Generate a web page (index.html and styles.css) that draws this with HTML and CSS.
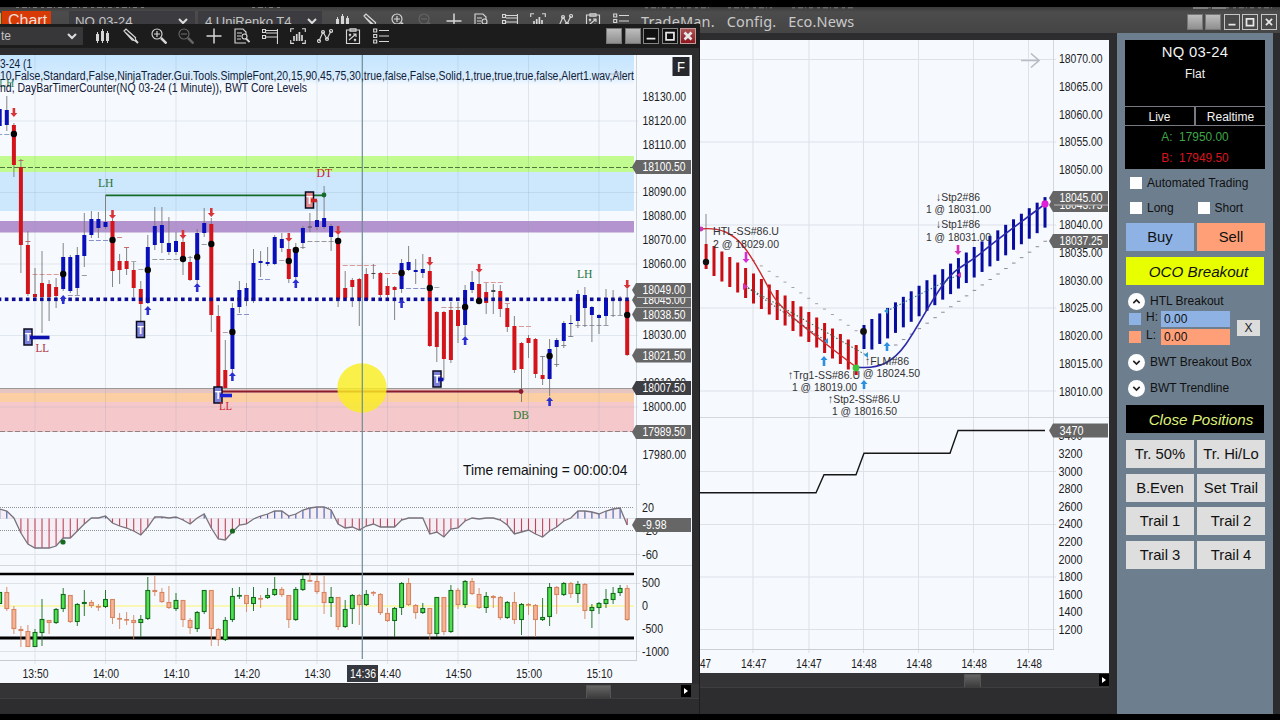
FILE: index.html
```html
<!DOCTYPE html>
<html lang="en">
<head>
  <meta charset="UTF-8">
  <meta name="viewport" content="width=device-width, initial-scale=1">
  <title>NQ 03-24 | Chart</title>
  <link rel="stylesheet" href="styles.css">
</head>
<body>

  <!-- toolbar icons, shared by both chart windows -->
  <svg class="icon-defs" width="0" height="0">
    <symbol id="i-bars" viewBox="0 0 16 16"><path d="M2.5 4v11M7.5 1v14M12.5 3v12" stroke-width="1"/><path d="M2.5 6v7M7.5 3v10M12.5 5v8" stroke-width="3"/></symbol>
    <symbol id="i-pencil" viewBox="0 0 16 16"><path d="M1 3l2-2 9 8 1 4-4-1zM3 5l8 7M5 3l8 7"/><path d="M12 12l3 3" stroke-width="2"/></symbol>
    <symbol id="i-zoomin" viewBox="0 0 16 16"><circle cx="6" cy="6" r="5"/><path d="M3 6h6M6 3v6"/><path d="M10 10l5.500 5.500" stroke-width="2.500"/></symbol>
    <symbol id="i-zoomout" viewBox="0 0 16 16"><circle cx="6" cy="6" r="5"/><path d="M3 6h6"/><path d="M10 10l5.500 5.500" stroke-width="2.500"/></symbol>
    <symbol id="i-cross" viewBox="0 0 16 16"><path d="M8 .5v15M.5 8h15" stroke-width="1.500"/></symbol>
    <symbol id="i-doc" viewBox="0 0 16 16"><path d="M12 6V4L9 1H1v14h11M3 5h5M3 8h4M3 11h4"/><circle cx="10.500" cy="8.500" r="2.500"/><path d="M12 10.500l3.500 3.500" stroke-width="1.800"/></symbol>
    <symbol id="i-panel" viewBox="0 0 16 16"><path d="M.5 1.500h3v3h-3zM.5 7.500h3v3h-3zM4 2.500h11M4 5h11M4 9h11M15.500 1v15"/></symbol>
    <symbol id="i-frame" viewBox="0 0 16 16"><path d="M.7 4V.7H4M12 .7h3.300V4M15.300 12v3.300H12M4 15.300H.7V12"/><path d="M4 8v5M6.700 6v7M9.400 4v9M12 7v6" stroke-width="1.700"/></symbol>
    <symbol id="i-zigzag" viewBox="0 0 16 16"><path d="M2 13l4-9 4 7 4-8"/><circle cx="2" cy="13" r="1.500"/><circle cx="6" cy="4" r="1.500"/><circle cx="10" cy="11" r="1.500"/><circle cx="14" cy="3" r="1.500"/></symbol>
    <symbol id="i-board" viewBox="0 0 16 16"><path d="M1.500 2h13v13.500h-13zM5 .7h6v2.500H5zM4 12l7-6M8 6h3v3M4 6l2 2M6 6L4 8M9 11l2 2M11 11l-2 2"/></symbol>
    <symbol id="i-list" viewBox="0 0 16 16"><path d="M.7 1h3v3h-3zM.7 6.500h3v3h-3zM.7 12h3v3h-3zM6 2.500h10M6 8h10M6 13.500h10"/></symbol>
    <symbol id="i-chevron" viewBox="0 0 10 8"><path d="M1 2l4 4 4-4" stroke-width="2"/></symbol>
  </svg>

  <div class="desktop">

    <div class="window window-back">
      <div class="titlebar">
        <span class="tab-edge"></span>
        <span class="tab">Chart</span>
        <div class="select select-symbol">NQ 03-24 <svg class="chevron"><use href="#i-chevron"/></svg></div>
        <div class="select select-type">4 UniRenko T4 <svg class="chevron"><use href="#i-chevron"/></svg></div>
        <div class="tools tools-back"></div>
        <nav class="menu">
          <span>TradeMan.</span>
          <span>Config.</span>
          <span>Eco.News</span>
        </nav>
        <div class="win-buttons">
          <i class="wb"></i>
          <i class="wb"></i>
          <i class="wb wb-line"><svg viewBox="0 0 16 16"><path d="M4 11h8"/></svg></i>
          <i class="wb wb-line"><svg viewBox="0 0 16 16"><path d="M4 4.500h8V12H4z"/></svg></i>
          <i class="wb wb-line"><svg viewBox="0 0 16 16"><path d="M4.500 4.500l7 7M11.500 4.500l-7 7"/></svg></i>
        </div>
        <!-- lower edge of the window behind -->
        <svg class="behind" viewBox="0 0 1280 3">
          <path d="M16 .5h130M252 .5h30M645 .8h64M728 .8h44M792 .8h62M1208 .8h64" stroke-dasharray="3 3 5 2 1 3 4 4"/>
          <path d="M1193 1h15M1212 1h14" stroke-width="2"/>
        </svg>
      </div>

      <div class="content">
        <div class="chart-back">
          <svg id="renkoChart" width="409" height="633" viewBox="700 40 409 633"></svg>
          <div class="scrollbar">
            <span class="thumb thumb-small"></span>
            <span class="scroll-arrow"></span>
          </div>
        </div>

        <aside class="panel">
          <div class="account">
            <div class="account-head">
              <div class="instrument">NQ 03-24</div>
              <div class="position">Flat</div>
            </div>
            <div class="account-mode">
              <span>Live</span>
              <span>Realtime</span>
            </div>
            <div class="quotes">
              <div class="ask">A:&nbsp; 17950.00</div>
              <div class="bid">B:&nbsp; 17949.50</div>
            </div>
          </div>

          <div class="checks">
            <label class="check"><i class="box"></i>Automated Trading</label>
            <label class="check"><i class="box"></i>Long</label>
            <label class="check"><i class="box"></i>Short</label>
          </div>

          <div class="orders">
            <button class="btn btn-buy">Buy</button>
            <button class="btn btn-sell">Sell</button>
          </div>
          <button class="btn btn-oco">OCO Breakout</button>

          <div class="expander">
            <i class="round"><svg viewBox="0 0 16 16"><path d="M5 9.500l3-3 3 3"/></svg></i>HTL Breakout
          </div>
          <div class="levels">
            <div class="level-rows">
              <div class="level"><i class="swatch blue"></i><span>H:</span><b class="blue">0.00</b></div>
              <div class="level"><i class="swatch orange"></i><span>L:</span><b class="orange">0.00</b></div>
            </div>
            <button class="btn-x">X</button>
          </div>
          <div class="expander expander-box">
            <i class="round"><svg viewBox="0 0 16 16"><path d="M5 6.500l3 3 3-3"/></svg></i>BWT Breakout Box
          </div>
          <div class="expander expander-trend">
            <i class="round"><svg viewBox="0 0 16 16"><path d="M5 6.500l3 3 3-3"/></svg></i>BWT Trendline
          </div>

          <button class="btn btn-close">Close Positions</button>

          <div class="trails">
            <button class="btn">Tr. 50%</button>
            <button class="btn">Tr. Hi/Lo</button>
            <button class="btn">B.Even</button>
            <button class="btn">Set Trail</button>
            <button class="btn">Trail 1</button>
            <button class="btn">Trail 2</button>
            <button class="btn">Trail 3</button>
            <button class="btn">Trail 4</button>
          </div>
        </aside>
      </div>
    </div>

    <div class="window window-front">
      <div class="toolbar">
        <div class="select select-interval">te <svg class="chevron"><use href="#i-chevron"/></svg></div>
        <div class="tools tools-front"></div>
        <div class="win-buttons">
          <i class="wb"></i>
          <i class="wb"></i>
          <i class="wb wb-dark"><svg viewBox="0 0 16 16"><path d="M3 11h10"/></svg></i>
          <i class="wb wb-dark"><svg viewBox="0 0 16 16"><path d="M3.500 4h9v8.500h-9z"/></svg></i>
          <i class="wb wb-close"><svg viewBox="0 0 16 16"><path d="M4 4l8 8M12 4l-8 8"/></svg></i>
        </div>
      </div>
      <div class="chart-front">
        <svg id="minuteChart" width="692" height="628" viewBox="0 55 692 628"></svg>
      </div>
      <div class="scrollbar">
        <span class="thumb"></span>
        <span class="scroll-arrow"></span>
      </div>
    </div>

  </div>

  <script src="charts.js"></script>
</body>
</html>
```

FILE: styles.css
```css
* {
  margin: 0;
  padding: 0;
  box-sizing: border-box;
}

body {
  width: 1280px;
  height: 720px;
  overflow: hidden;
  background-color: #000;
  font-family: "Liberation Sans", Arial, sans-serif;
  color: #111;
}

.icon-defs {
  position: absolute;
}

.desktop {
  position: relative;
  width: 1280px;
  height: 714px;
  padding-top: 7px;
}

.window {
  display: flex;
  flex-direction: column;
  background-color: #2d2d30;
}

.window-back {
  height: 707px;
}

/* window floating over the first one */
.window-front {
  position: absolute;
  left: 0;
  top: 24px;
  width: 699px;
  height: 690px;
  box-shadow: 1px 0 0 #1c1c1e;
}

/* ---- title bar of the back window ---- */
.titlebar {
  position: relative;
  display: flex;
  height: 26px;
  padding-right: 3px;
  background: linear-gradient(#3a3a3b, #4c4c4c 5px, #454546);
}

.behind {
  position: absolute;
  left: 0;
  top: 0;
  width: 1280px;
  height: 3px;
  fill: none;
  stroke: #999;
  opacity: 0.7;
}

.tab-edge {
  width: 1px;
  height: 18px;
  margin-top: 6px;
  background-color: #e9a02c;
}

.tab {
  width: 49px;
  margin: 4px 0 0 1px;
  padding-left: 6px;
  background-color: #d83a06;
  color: #f1dfd8;
  font-size: 16px;
  line-height: 20px;
}

.select {
  display: flex;
  align-items: center;
  justify-content: space-between;
  background-color: #3c3c40;
  color: #c4c4c4;
  font-size: 14px;
}

.select-symbol {
  width: 126px;
  height: 20px;
  margin: 4px 0 0 18px;
  padding: 0 7px 0 6px;
  font-size: 13.3px;
}

.select-type {
  width: 124px;
  height: 20px;
  margin: 4px 0 0 3px;
  padding: 0 5px 0 7px;
  font-size: 13px;
}

.chevron {
  width: 10px;
  height: 8px;
  fill: none;
  stroke: #ddd;
}

.tools {
  display: flex;
  fill: none;
  stroke: #d6d6d6;
  stroke-width: 1.15;
}

.tools svg {
  width: 16px;
  height: 16px;
  flex: none;
}

.tools .off {
  stroke: #666;
}

.tools-back {
  gap: 11.8px;
  width: 316px;
  padding: 6px 0 0 13px;
}

.tools-front {
  gap: 11.8px;
  width: 523px;
  padding-left: 12px;
}

.menu {
  display: flex;
  gap: 12px;
  margin-left: 3px;
  padding-top: 4px;
  color: #c9c9c9;
  font-family: "Noto Sans", sans-serif;
  font-size: 14.5px;
  line-height: 20px;
  letter-spacing: 0.15px;
}

.win-buttons {
  display: flex;
  gap: 2.6px;
}

.titlebar .win-buttons {
  margin: 7px 0 0 auto;
}

.wb {
  width: 16px;
  height: 16px;
  border: 1px solid #777;
  background: linear-gradient(#bdbdbd, #8f8f8f);
}

.wb svg {
  display: block;
  width: 14px;
  height: 14px;
  fill: none;
  stroke: #e8e8e8;
  stroke-width: 2;
}

.wb-line {
  border-color: #c5c5c5;
  background: #4a4a4a;
}

.wb-dark {
  border-color: #858585;
  background: #111;
}

.wb-close {
  border-color: #c59a9a;
  background: linear-gradient(#a55, #8d1520);
}

.wb-close svg {
  stroke-width: 3;
}

/* ---- front window ---- */
.toolbar {
  display: flex;
  align-items: center;
  height: 24px;
  background-color: #1c1c1d;
}

.select-interval {
  width: 83px;
  height: 18px;
  padding: 0 6px 0 1px;
  background-color: #37373a;
  font-size: 12px;
}

.chart-front {
  height: 629px;
  margin-top: 7px;
}

.chart-front svg,
.chart-back svg {
  display: block;
}

.scrollbar {
  display: flex;
  align-items: center;
  justify-content: flex-end;
  height: 15px;
  background-color: #343436;
  border-bottom: 1px solid #3e3e40;
}

.thumb {
  width: 25px;
  height: 13px;
  margin-right: 70px;
  border: 1px solid #555;
  border-bottom: none;
  background: linear-gradient(#656565, #3c3c3c);
}

.thumb-small {
  width: 17px;
  margin-right: 118px;
}

.scroll-arrow {
  display: flex;
  align-items: center;
  justify-content: center;
  width: 10px;
  height: 12px;
  background-color: #000;
}

.scroll-arrow::after {
  content: "";
  border-left: 4px solid #fff;
  border-top: 3px solid transparent;
  border-bottom: 3px solid transparent;
}

.window-front .scrollbar {
  padding-right: 8px;
}

/* ---- back window content ---- */
.content {
  display: flex;
  justify-content: flex-end;
  height: 681px;
  padding-right: 7px;
}

.chart-back {
  width: 409px;
  margin: 7px 8px 0 0;
}

/* ---- order panel ---- */
.panel {
  display: flex;
  flex-direction: column;
  width: 156px;
  padding: 7px 8px;
  background-color: #6d7f8f;
}

.account {
  display: flex;
  flex-direction: column;
  gap: 1px;
  height: 129px;
  background-color: #777a80;
  color: #f2f2f2;
  text-align: center;
}

.account-head {
  height: 68px;
  padding-top: 3px;
  background-color: #000;
}

.instrument {
  font-size: 14.8px;
  line-height: 18px;
  letter-spacing: 0.3px;
}

.position {
  margin-top: 5px;
  font-size: 12px;
  line-height: 16px;
}

.account-mode {
  display: flex;
  gap: 2px;
  height: 18px;
  font-size: 12px;
  line-height: 20px;
}

.account-mode span {
  flex: 1;
  background-color: #000;
}

.quotes {
  flex: 1;
  padding-top: 1px;
  background-color: #000;
  font-size: 11.9px;
  line-height: 21px;
}

.ask {
  color: #3fa648;
}

.bid {
  color: #d8141e;
}

.checks {
  display: flex;
  flex-wrap: wrap;
  align-content: flex-start;
  row-gap: 9px;
  height: 54px;
  padding: 6px 0 0 5px;
  font-size: 12px;
}

.check {
  display: flex;
  align-items: center;
  gap: 5px;
  width: 67.500px;
  height: 16px;
  white-space: nowrap;
}

.check:first-child {
  width: 130px;
}

.box {
  width: 12px;
  height: 12px;
  background-color: #fff;
}

.orders {
  display: flex;
  gap: 3px;
  margin: 0 0 6px 1px;
}

.btn {
  width: 68px;
  height: 28px;
  border: none;
  background-color: #dedede;
  color: #111;
  font-family: inherit;
  font-size: 14.8px;
}

.btn-buy {
  background-color: #8db2e3;
}

.btn-sell {
  background-color: #ff9f78;
}

.btn-oco,
.btn-close {
  width: 138px;
  margin-left: 1px;
  padding-left: 7px;
  font-size: 15.2px;
  font-style: italic;
}

.btn-oco {
  background-color: #e8ff00;
}

.btn-close {
  margin-top: 8px;
  padding-left: 12px;
  background-color: #000;
  color: #dff07a;
}

.expander {
  display: flex;
  align-items: center;
  gap: 5px;
  height: 18px;
  margin-top: 7px;
  padding-left: 3px;
  font-size: 12px;
}

.round {
  width: 17px;
  height: 17px;
  border-radius: 50%;
  background-color: #fff;
}

.round svg {
  display: block;
  fill: none;
  stroke: #222;
  stroke-width: 1.6;
}

.levels {
  display: flex;
  align-items: center;
  gap: 7px;
  padding: 1px 0 0 4px;
}

.level-rows {
  display: flex;
  flex-direction: column;
  gap: 2px;
}

.level {
  display: flex;
  align-items: center;
  height: 16px;
  font-size: 12px;
}

.level span {
  width: 20px;
  padding-left: 5px;
  line-height: 10px;
  margin-top: -5px;
}

.level b {
  width: 69px;
  height: 16px;
  padding-left: 3px;
  font-weight: normal;
  line-height: 17px;
}

.swatch {
  width: 12px;
  height: 12px;
}

.blue {
  background-color: #8db2e3;
}

.orange {
  background-color: #ff9f78;
}

.btn-x {
  width: 23px;
  height: 16px;
  border: none;
  background-color: #dcdcdc;
  color: #222;
  font-family: inherit;
  font-size: 12px;
}

.expander-box {
  margin-top: 8px;
}

.expander-trend {
  margin-top: 8px;
}

.trails {
  display: grid;
  grid-template-columns: 68px 68px;
  gap: 5.7px 3px;
  margin: 7px 0 0 1px;
}

/* ---- chart text ---- */
.axis {
  font-size: 12px;
  fill: #1c1c1c;
}

.tag-text {
  font-size: 12px;
  fill: #fff;
}

.info {
  font-size: 12px;
  fill: #10203a;
}

.swing {
  font-family: "Liberation Serif", serif;
  font-size: 12.5px;
}

.remaining {
  font-size: 14.5px;
  fill: #111;
}

.trade {
  font-size: 11.5px;
  fill: #333;
}
```

FILE: charts.js
```js
const BG = '#f6f9fe';
const GRID = '#dde1e8';

function line(x1, y1, x2, y2, color, width, dash) {
  return `<line x1="${x1}" y1="${y1}" x2="${x2}" y2="${y2}" stroke="${color}" stroke-width="${width || 1}"${dash ? ` stroke-dasharray="${dash}"` : ''}/>`;
}

function rect(x, y, w, h, fill, extra) {
  return `<rect x="${x}" y="${y}" width="${w}" height="${h}" fill="${fill}" ${extra || ''}/>`;
}

function text(x, y, str, cls, len, extra) {
  const fit = len ? `textLength="${len}" lengthAdjust="spacingAndGlyphs"` : '';
  return `<text x="${x}" y="${y}" class="${cls}" ${fit} ${extra || ''}>${str}</text>`;
}

function dot(x, y, r, color) {
  return `<circle cx="${x}" cy="${y}" r="${r}" fill="${color}"/>`;
}

// price marker on the right axis, y is its middle
function tag(x, y, w, str, len, color) {
  return `<path d="M${x} ${y}l4 -7h${w - 4}v14h${4 - w}z" fill="${color || '#666'}"/>` +
    text(x + 10.5, y + 4.3, str, 'tag-text', len);
}

// small arrow, dir 1 = down, -1 = up, y is the tip
function arrow(x, y, dir, color, h) {
  return line(x, y - dir * (h || 9), x, y - dir * 2, color, 2.6) +
    `<path d="M${x - 3.5} ${y - dir * 4}h7l-3.500 ${dir * 4}z" fill="${color}"/>`;
}

// ---------- toolbars ----------
const icons = ['bars', 'pencil', 'zoomin', 'zoomout', 'cross', 'doc', 'panel', 'frame', 'zigzag', 'board', 'list'];
document.querySelectorAll('.tools').forEach(el => {
  el.innerHTML = icons.map(n => `<svg class="${n === 'zoomout' ? 'off' : ''}"><use href="#i-${n}"/></svg>`).join('');
});

// ---------- 1 minute chart ----------
// minutes from 13:50, colour, high, body top, body bottom, low
const candles = [
  [-5,'b',109,109,126,126],[-4,'b',96,110,125,131],[-3,'r',123,125,165,177],[-2,'r',159,167,245,273],
  [-1,'r',231,245,294,296],[0,'r',268,294,297,298],[1,'r',251,283,297,333],[2,'r',280,284,297,321],
  [3,'r',278,287,296,308],[4,'b',243,257,289,291],[5,'b',255,257,291,293],[6,'b',247,255,288,295],
  [7,'b',213,235,256,267],[8,'b',211,219,235,238],[9,'b',212,219,228,238],[10,'b',195,222,227,229],
  [11,'r',219,221,271,287],[12,'r',254,261,270,284],[13,'r',248,261,269,275],[14,'r',262,270,288,297],
  [15,'r',281,289,304,323],[16,'b',235,247,303,304],[17,'b',207,226,245,250],[18,'b',207,225,243,253],
  [19,'b',217,243,252,255],[20,'b',232,241,252,255],[21,'r',238,242,260,275],[22,'r',256,262,280,281],
  [23,'b',229,233,280,283],[24,'b',208,223,233,237],[25,'r',218,224,315,332],[26,'r',305,316,387,388],
  [27,'r',340,370,388,389],[28,'b',303,308,369,372],[29,'b',281,290,307,313],[30,'b',283,288,301,306],
  [31,'b',249,263,301,303],[32,'b',251,261,263,277],[33,'b',247,262,264,266],[34,'b',235,237,264,265],
  [35,'b',233,239,248,252],[36,'r',242,249,279,283],[37,'b',243,250,277,279],[38,'b',226,228,243,249],
  [39,'k',213,226.5,227.5,232],[40,'b',200,220,227,230],[41,'b',186,218,227,229],[42,'b',224,226,237,251],
  [43,'r',235,241,299,307],[44,'r',271,288,298,300],[45,'r',278,280,287,307],[46,'r',278,279,298,326],
  [47,'r',268,274,300,300],[48,'k',264,273,274,279],[49,'r',272,273,295,297],[50,'r',278,286,295,298],
  [51,'r',286,287,290,320],[52,'b',259,263,289,293],[53,'b',246,262,270,271],[54,'b',259,270,272,284],
  [55,'b',254,269,273,278],[56,'r',266,271,346,347],[57,'r',311,312,347,362],[58,'r',311,312,359,380],
  [59,'r',302,310,360,363],[60,'r',302,310,326,343],[61,'b',285,290,325,336],[62,'b',271,282,290,293],
  [63,'r',273,284,301,303],[64,'r',283,292,303,314],[65,'k',284,290,292,314],[66,'r',285,291,309,317],
  [67,'r',304,308,327,332],[68,'r',316,326,370,373],[69,'r',342,343,369,402],[70,'r',335,338,343,358],
  [71,'r',338,339,374,378],[72,'r',356,375,379,385],[73,'b',339,349,379,396],[74,'b',338,340,347,367],
  [75,'b',321,323,341,348],[76,'b',315,323,324,337],[77,'b',290,294,321,328],[78,'b',287,295,308,327],
  [79,'b',306,307,315,342],[80,'b',314,315,318,334],[81,'b',289,298,316,325],[82,'k',290,299,300,317],
  [83,'k',296,299,300,315],[84,'r',289,300,355,356]
];
const dots = [[-3,134],[4,274],[11,240],[16,270],[21,259],[23,257],[25,244],[28,332],[36,261],[37,250],[43,241],[52,273],[56,288],[61,307],[63,301],[73,356],[84,315]];
const downs = [[-3,117],[11,219],[21,239],[25,217],[36,242],[43,235],[56,266],[63,273],[84,289]];
const ups = [[4,295],[16,306],[23,283],[28,372],[37,279],[52,299],[61,336],[73,397]];
// stop dashes: from minute, to minute, y, colour
const stops = [
  [-5,-4,134,'#8fa0c0'],[0,3,274,'#d99'],[-2,-2,160,'#c66'],[-1,-1,241,'#c66'],[5,6,295,'#99a'],[7,7,275,'#99a'],[8,10,240,'#8790c8'],
  [12,12,237,'#c88'],[13,13,247,'#c66'],[14,14,261,'#aaa'],[15,15,269,'#aaa'],[17,20,259,'#999'],[22,22,257,'#aaa'],
  [24,24,244,'#99a'],[27,27,332,'#b9a'],[29,30,314,'#8790c8'],[32,33,279,'#8790c8'],[35,35,260,'#aaa'],[38,38,247,'#99a'],
  [39,42,241,'#999'],[44,48,265,'#d99'],[50,51,273,'#d77'],[53,55,288,'#8790c8'],[57,57,287,'#aaa'],[58,60,307,'#c99'],
  [64,66,282,'#d99'],[67,67,303,'#c99'],[69,70,326,'#d99'],[72,72,356,'#889'],[74,74,364,'#889'],[75,75,345,'#889'],
  [76,76,336,'#889'],[77,81,325,'#99a'],[82,83,315,'#99a']
];
const osc = [509,511,518,533,544,548,548,548,546,538,538,531,524,518,518,516,523,526,528,531,535,527,517,517,518,517,520,524,518,514,528,539,540,532,525,524,519,516,514,511,511,516,514,510,508,507,507,510,524,528,527,530,526,524,527,527,527,520,518,518,518,534,532,537,529,528,521,518,519,518,518,520,525,534,532,530,534,537,531,527,521,518,511,511,512,514,511,509,508,525];
const delta = [
  ['g',592,592,604,604],['o',587,592,609,611],['o',606,609,629,634],['o',626,629,631,647],['o',625,631,647,647],['g',629,632,647,647],
  ['g',599,619,633,646],['o',620,620,623,634],['g',608,609,623,624],['g',588,594,609,612],['o',595,595,622,623],['g',603,604,622,626],
  ['g',590,602,604,616],['o',600,602,606,608],['o',604,606,607,611],['g',590,599,607,608],['o',599,599,618,624],['o',613,618,619,629],
  ['o',612,619,620,625],['o',615,620,623,639],['g',615,619,623,637],['g',577,590,619,620],['o',576,590,592,596],['o',588,592,602,603],
  ['o',586,602,608,609],['g',593,600,609,611],['o',600,600,620,627],['o',618,620,628,634],['g',611,612,629,632],['g',590,590,612,614],
  ['o',590,590,629,646],['o',628,629,640,646],['g',617,620,640,641],['g',588,596,620,622],['g',587,595,596,599],['o',595,595,604,612],
  ['g',587,597,604,611],['o',595,598,599,608],['g',588,595,598,599],['g',577,589,595,596],['o',587,589,595,597],['o',595,595,620,628],
  ['g',587,589,620,621],['g',575,579,590,591],['o',572,580,581,582],['o',575,581,592,594],['o',576,592,603,614],['g',587,597,603,617],
  ['o',597,597,627,630],['g',600,609,627,628],['g',594,595,609,624],['o',594,595,605,625],['g',590,594,605,606],['o',591,592,592,596],
  ['o',593,594,613,615],['o',608,613,621,622],['g',607,608,621,637],['g',582,583,608,615],['o',578,583,605,606],['o',604,605,613,619],
  ['g',603,608,613,614],['o',608,608,634,640],['g',597,597,634,637],['o',597,597,632,635],['g',585,590,632,633],['o',588,590,605,609],
  ['g',580,581,605,608],['o',578,581,594,595],['o',588,594,608,609],['g',592,596,608,613],['o',595,596,598,608],['o',596,597,618,620],
  ['g',601,602,618,619],['o',592,602,620,624],['g',603,604,620,635],['o',603,604,605,615],['o',604,605,620,637],['g',598,617,620,621],
  ['g',583,587,617,626],['o',586,587,595,614],['g',582,583,595,596],['o',582,583,594,598],['g',581,584,594,603],['o',583,584,611,619],
  ['g',604,607,611,628],['g',602,603,608,614],['g',589,599,604,608],['g',587,593,600,604],['g',585,588,593,596],['o',585,588,620,621]
];

const mx = i => +(35 + i * 7.05).toFixed(1);

function drawMinuteChart() {
  let s = rect(0, 55, 692, 628, BG);
  s += '<defs><linearGradient id="fade" x2="0" y2="1"><stop stop-color="#c5e5ff"/><stop offset=".7" stop-color="#d4ebfd"/><stop offset="1" stop-color="#f6f9fe"/></linearGradient></defs>';

  // zones
  s += rect(0, 55, 634, 30, 'url(#fade)');
  s += rect(0, 156, 634, 16, '#c2fc90');
  s += rect(0, 172, 634, 39, '#cde7fd');
  s += rect(0, 221, 634, 11.5, '#b394ce');
  s += rect(0, 388, 634, 44, '#f5c9cc');
  s += rect(0, 388, 634, 5, '#e4c5c2');
  s += rect(0, 393, 634, 9, '#fbcea4');

  // grid
  for (let i = 0; i <= 80; i += 10) s += line(mx(i), 55, mx(i), 664, '#8899aa', 1).replace('/>', ' opacity=".2"/>');
  [121, 192.5, 264, 335.5, 407].forEach(y => s += line(0, y, 638, y, '#8899aa', 1).replace('/>', ' opacity=".18"/>'));
  [484.5, 518.5, 554.5, 583.500, 651.5].forEach(y => s += line(0, y, 640, y, GRID));
  s += line(0, 565.5, 692, 565.5, '#d4d8de') + line(0, 660.5, 637, 660.5, '#c8ccd2') + line(636.5, 55, 636.5, 660, '#cfd4da');

  s += line(0, 167.5, 634, 167.5, '#4d7a3c', 1, '5 2');
  s += line(0, 388.500, 634, 388.500, '#999', 1);
  s += line(0, 431.5, 634, 431.5, '#8f8388', 1.2, '5 2.5');
  s += line(218, 391.5, 521, 391.5, '#8b1a2b', 2);
  s += line(105.5, 195.3, 324, 195.3, '#176b28', 1.8);

  stops.forEach(([a, b, y, c]) => {
    for (let i = a; i <= b; i++) s += line(mx(i) - 2.5, y + .5, mx(i) + 2.5, y + .5, c);
  });

  const col = { b: '#0a10b8', r: '#d3151b', k: '#444' };
  candles.forEach(([i, c, h, t, b, l]) => {
    s += line(mx(i), h, mx(i), l, '#777', .9);
    s += rect(mx(i) - 2, t, 4, b - t, col[c]);
  });
  for (let i = -5; i <= 84; i++) s += rect(mx(i) - 2, 297.500, 3.6, 3.6, '#0c0c96');
  dots.forEach(([i, y]) => s += dot(mx(i), y, 3.2, '#050505'));
  downs.forEach(([i, y]) => s += arrow(mx(i), y, 1, '#d83438'));
  ups.forEach(([i, y]) => s += arrow(mx(i), y, -1, '#2c2fd0'));

  // T boxes
  [[28, 337, '#7c80d8'], [140.500, 329.500, '#7c80d8'], [218, 395, '#7c80d8'], [437, 379, '#7c80d8'], [309.500, 200, '#e58b8b']].forEach(([x, y, c]) => {
    s += rect(x - 4, y - 8, 8, 16, c, 'stroke="#0b0b20" stroke-width="1.5"');
    s += text(x - 3, y + 4, 'T', 'axis', 0, 'style="fill:#fff;font-size:10px;font-weight:bold"');
  });
  s += line(30, 337.5, 49.5, 337.5, '#0b0fae', 3.6) + line(220, 395.5, 232, 395.5, '#1a1fd8', 3.6) + line(438, 379.5, 443.5, 379.5, '#0b0fae', 3.6) + line(311, 200.5, 317, 200.5, '#c22', 3.6);
  s += dot(324, 195, 2.4, '#176b28') + dot(521, 391.5, 2.4, '#8b1a2b');

  [['LH', 98, 187, '#26743a', 15.5], ['LH', 577, 278, '#26743a', 15.5], ['DB', 513, 419, '#2f7a2f', 16], ['LL', 35.500, 352, '#b03040', 13.5], ['LL', 219, 410, '#d0202c', 13], ['DT', 316.500, 177, '#cc2030', 15.5], ['LH', -1, 87, '#3b8a55', 15.5]].forEach(([t, x, y, c, w]) => {
    s += text(x, y, t, 'swing', w, `fill="${c}"`);
  });

  // oscillator
  s += line(0, 507.5, 634, 507.5, '#8e939c', 1, '1 1') + line(0, 530.5, 634, 530.5, '#8e939c', 1, '1 1');
  const pts = osc.map((y, k) => `${mx(k - 5)},${y}`).join(' ');
  s += `<polygon points="0,518.500 ${pts} 627,518.500" fill="#f6dfe8" opacity=".45"/>`;
  osc.forEach((y, k) => {
    if (Math.abs(y - 518.5) > 1) s += line(mx(k - 5), 518.5, mx(k - 5), y, y > 518 ? '#b8475c' : '#3d5fae', 1.1);
  });
  s += `<polyline points="${pts}" fill="none" stroke="#77727c" stroke-width="1.300"/>`;
  s += dot(63, 542, 2.6, '#176b20') + dot(232.5, 531, 2.6, '#176b20');

  // delta candles
  s += line(0, 574, 634, 574, '#000', 2.6) + line(0, 638, 634, 638, '#000', 2.8);
  s += line(0, 606, 634, 606, '#fbf49a', 1.6);
  delta.forEach(([c, h, t, b, l], k) => {
    const x = mx(k - 5);
    const edge = c === 'g' ? '#126b1a' : '#d6855f';
    s += line(x, h, x, l, edge, .9);
    s += rect(x - 1.9, t + .5, 3.8, Math.max(b - t - 1, .6), c === 'g' ? '#4fe04f' : '#f5b497', `stroke="${edge}" stroke-width="1.100"`);
  });

  // cursor
  s += '<circle cx="362" cy="388" r="24.700" fill="#faee22" opacity=".82"/>';
  s += line(362.3, 55, 362.3, 659, '#6b8d93', 1.2);

  // price axis
  [[18130, 97], [18120, 121], [18110, 145], [18090, 192], [18080, 216], [18070, 240], [18060, 264], [18030, 335], [18010, 383], [18000, 407], [17980, 454.5]].forEach(([p, y]) => {
    s += text(642.500, y + 4.3, p + '.00', 'axis', 43.5);
  });
  [['20', 507.5, 12], ['-20', 531, 16], ['-60', 554.5, 16], ['500', 583, 18], ['0', 606, 6], ['-500', 629, 21], ['-1000', 651.500, 27]].forEach(([t, y, w]) => {
    s += text(642, y + 4.3, t, 'axis', w);
  });
  s += tag(632, 300, 59, '18045.00', 43) + tag(632, 167, 59, '18100.50', 43) + tag(632, 290, 59, '18049.00', 43) + line(637, 297.500, 691, 297.500, '#bbb');
  s += tag(632, 314.5, 59, '18038.50', 43) + tag(632, 355.5, 59, '18021.50', 43) + tag(632, 388, 59, '18007.50', 43, '#3c3e43') + tag(632, 432, 59, '17989.50', 43);
  s += tag(632, 525, 59, '-9.98', 24);

  // time axis
  ['13:50', '14:00', '14:10', '14:20', '14:30', '', '14:50', '15:00', '15:10'].forEach((t, k) => {
    if (t) s += text(mx(k * 10) - 12.500, 678.3, t, 'axis', 26);
  });
  s += text(380, 678.3, '4:40', 'axis', 21);
  s += rect(347, 665, 31, 17, '#35383e') + text(350, 678, '14:36', 'tag-text', 26);

  s += text(0, 68, '3-24 (1', 'info', 32);
  s += text(0, 80.3, '10,False,Standard,False,NinjaTrader.Gui.Tools.SimpleFont,20,15,90,45,75,30,true,false,False,Solid,1,true,true,true,false,Alert1.wav,Alert', 'info', 634);
  s += text(0, 92.3, 'nd, DayBarTimerCounter(NQ 03-24 (1 Minute)), BWT Core Levels', 'info', 307);
  s += '<path d="M608 74h11m-4 -5l5 5l-5 5" fill="none" stroke="#aab" opacity=".7"/>';
  s += text(463, 475.3, 'Time remaining = 00:00:04', 'remaining', 164.5);
  s += rect(672.5, 57, 17, 19, '#26282e') + text(677, 71.500, 'F', 'tag-text', 8, 'style="font-size:14px"');

  document.getElementById('minuteChart').innerHTML = s;
}

// ---------- UniRenko chart ----------
function drawRenkoChart() {
  let s = rect(700, 40, 409, 633, BG);
  [753, 809, 863.5, 918.5, 973.500, 1028.5].forEach(x => s += line(x, 40, x, 653, GRID));
  [59.5, 142, 225, 308, 391, 471.500, 524.500, 577, 629.5].forEach(y => s += line(700, y, 1056, y, GRID));
  s += line(700, 417.5, 1109, 417.5, '#d4d8de') + line(700, 649.5, 1054, 649.5, '#ccd0d6') + line(1053.5, 40, 1053.5, 649, '#d4d8de');

  s += line(706, 214, 706, 245, '#888');
  for (let k = 0; k < 20; k++) {
    const top = k ? 246 + 5.5 * (k - 1) : 244;
    s += rect(704.6 + 7.9 * k, top, 3, k ? 30 : 25, '#c80e12');
    if (k > 5 && k < 20) s += line(704.5 + 7.9 * k, 260.5 + 5.4 * (k - 6), 707.5 + 7.9 * k, 260.5 + 5.4 * (k - 6), '#a5a0a5');
  }
  for (let k = 0; k < 24; k++) {
    const top = k ? 319 - 5.54 * (k - 1) : 325;
    s += rect(862.5 + 7.87 * k, top, 3, k ? 30.5 : 24, '#070c9e');
    if (k > 3) s += line(862.5 + 7.87 * k, 345 - 5.46 * (k - 4), 866 + 7.87 * k, 345 - 5.46 * (k - 4), '#8c8c96');
  }

  s += '<path d="M700 229C720 227 733 233 744 247S763 278 772 294S806 329 856 367" fill="none" stroke="#cc2a2c" stroke-width="1.400"/>';
  s += '<path d="M856 367C880 370 894 361 906 344S928 306 942 286S963 268 981 253S1020 223 1045 204" fill="none" stroke="#2c2aa8" stroke-width="1.600"/>';
  s += line(745, 286, 826, 341, '#555', 1.1, '1.5 2') + line(745, 286, 866, 355, '#3a6b4c', 1.1, '1.5 2') + line(887, 311, 958, 275, '#347891', 1.2, '1.5 2');
  s += dot(706, 262, 3.2, '#111') + dot(863.5, 331.5, 3.4, '#111') + dot(856, 368, 3.4, '#3ec33a') + dot(1045, 204, 3.4, '#e020d8') + dot(701, 229, 2.4, '#c638b8');
  s += arrow(746, 263, 1, '#d62fd0', 11) + arrow(958, 255, 1, '#d62fb8', 10);
  s += '<path d="M743 283l5 3.500l-5 3.500zM961 272l-4 3l4 3z" fill="#d62fb8"/>';
  s += '<path d="M888 308l-4 3l4 3zM868 352l-4 3l4 3zM828 338l-4 3l4 3z" fill="#3395d6"/>';
  s += arrow(824, 356, -1, '#2c8fe0', 10) + arrow(864, 380, -1, '#2c8fe0', 9) + arrow(887, 342, -1, '#2c8fe0', 9);

  // executions
  [
    [713, 235, 'HTL-SS#86.U', 66], [713, 248, '2 @ 18029.00', 66],
    [788, 379, '↑Trg1-SS#86.U', 72], [792, 391, '1 @ 18019.00', 65],
    [865, 365, '↑FLM#86', 44], [863, 377, '@ 18024.50', 57],
    [828, 403, '↑Stp2-SS#86.U', 72], [832, 415, '1 @ 18016.50', 65],
    [936, 201, '↓Stp2#86', 44], [926, 213, '1 @ 18031.00', 65],
    [936, 228, '↓Stp1#86', 44], [926, 241, '1 @ 18031.00', 65]
  ].forEach(([x, y, t, w]) => s += text(x, y, t, 'trade', w));

  [[18070, 59], [18065, 87], [18060, 114.5], [18055, 142], [18050, 170], [18040, 225], [18035, 253], [18030, 281], [18025, 308], [18020, 336], [18015, 364], [18010, 391.5]].forEach(([p, y]) => {
    s += text(1059, y + 4.3, p + '.00', 'axis', 43.5);
  });
  for (let v = 3400, y = 436; v >= 1200; v -= 200, y += 17.6) s += text(1058.5, y + 4.3, v, 'axis', 24);

  s += tag(1049, 205, 59, '18043.75', 43) + tag(1049, 198, 59, '18045.00', 43) + line(1054, 205, 1108, 205, '#bbb');
  s += dot(1045, 204, 3.4, '#e020d8');
  s += tag(1049, 241, 59, '18037.25', 43) + tag(1049, 430.5, 59, '3470', 24);
  s += '<polyline points="700,492.700 816,492.700 824,474.800 856,474.800 864,453.300 950,453.300 958,430.500 1045,430.500" fill="none" stroke="#161616" stroke-width="1.400"/>';

  s += text(700, 668, '47', 'axis', 11);
  ['14:47', '14:47', '14:48', '14:48', '14:48', '14:48'].forEach((t, k) => s += text(741 + 55.1 * k, 668, t, 'axis', 25.5));
  s += '<path d="M1021 60.500h17m-7 -7l8 7l-8 7" fill="none" stroke="#b8bcc2" stroke-width="1.600"/>';

  document.getElementById('renkoChart').innerHTML = s;
}

drawMinuteChart();
drawRenkoChart();
```
